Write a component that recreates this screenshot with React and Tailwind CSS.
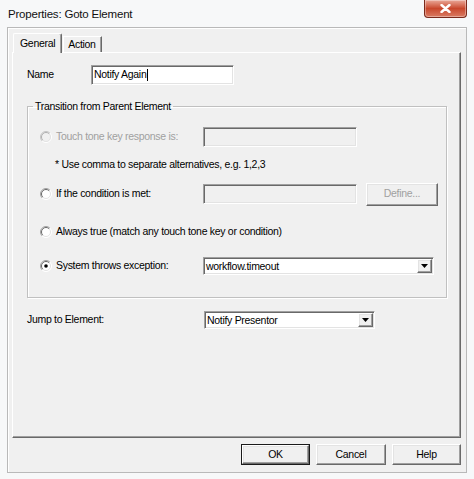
import React from "react";

const sunken =
  "border border-t-[#a0a0a0] border-l-[#a0a0a0] border-r-white border-b-white shadow-[inset_1px_1px_0_#696969,inset_-1px_-1px_0_#e3e3e3]";
const raised =
  "border border-t-white border-l-white border-r-[#696969] border-b-[#696969] shadow-[inset_-1px_-1px_0_#a0a0a0,inset_1px_1px_0_#e3e3e3] bg-[#f0f0f0]";

function Radio({ checked, disabled }) {
  return (
    <svg width="12" height="12" viewBox="0 0 12 12" className="shrink-0">
      <circle cx="6" cy="6" r="5.5" fill={disabled ? "#f0f0f0" : "#ffffff"} />
      <path d="M2.1 9.9 A5.5 5.5 0 0 1 9.9 2.1" stroke={disabled ? "#c4c4c4" : "#a0a0a0"} fill="none" />
      <path d="M9.9 2.1 A5.5 5.5 0 0 1 2.1 9.9" stroke="#ffffff" fill="none" />
      <path d="M2.8 9.2 A4.5 4.5 0 0 1 9.2 2.8" stroke={disabled ? "#b0b0b0" : "#696969"} fill="none" />
      <path d="M9.2 2.8 A4.5 4.5 0 0 1 2.8 9.2" stroke="#e3e3e3" fill="none" />
      {checked && <circle cx="6" cy="6" r="1.8" fill="#000" />}
    </svg>
  );
}

function ArrowBtn() {
  return (
    <div className={`${raised} w-[15px] h-full flex items-center justify-center`}>
      <svg width="7" height="4" viewBox="0 0 7 4">
        <path d="M0 0 H7 L3.5 4 Z" fill="#000" />
      </svg>
    </div>
  );
}

function Combo({ value, w }) {
  return (
    <div className={`${sunken} bg-white ${w} h-[18px] flex items-stretch p-[1px]`}>
      <div className="flex-1 flex items-center pl-[1px] text-black leading-none">{value}</div>
      <ArrowBtn />
    </div>
  );
}

export default function App() {
  return (
    <div className="w-[474px] h-[479px] bg-[#f7f8f9] font-['Liberation_Sans',Arial,sans-serif] text-[10.5px] tracking-[-0.3px] text-black flex flex-col overflow-hidden">
      {/* title bar */}
      <div className="h-[27px] flex items-start shrink-0">
        <div className="pl-[8px] pt-[7px] text-[11.5px] tracking-[-0.2px] leading-[14px] text-[#111]">
          Properties: Goto Element
        </div>
        <div className="ml-auto mr-[7px] w-[43px] h-[18px] rounded-b-[4px] border border-t-0 border-[#7a2a1c] bg-gradient-to-b from-[#e9a898] via-[#c8472c] to-[#d97b63] flex items-center justify-center shadow-[inset_0_0_0_1px_rgba(255,255,255,0.35)]">
          <svg width="11" height="9" viewBox="0 0 11 9">
            <path d="M1.5 1 L9.5 8 M9.5 1 L1.5 8" stroke="#ffffff" strokeWidth="2.4" strokeLinecap="round" />
          </svg>
        </div>
      </div>

      {/* client area */}
      <div className="mx-[7px] h-[446px] border border-[#b9b9b9] bg-[#f0f0f0] flex flex-col shrink-0 shadow-[inset_1px_1px_0_#ffffff]">
        {/* tabs */}
        <div className="h-[24px] pl-[5px] pr-[5px] pt-[5px] flex items-end relative z-10 shrink-0">
          <div className="h-[20px] px-[6px] flex items-center border border-b-0 border-t-white border-l-white border-r-[#696969] bg-[#f0f0f0] mb-[-1px] ml-[0px] rounded-t-[2px] shadow-[inset_-1px_0_0_#a0a0a0]">
            General
          </div>
          <div className="h-[16px] px-[5px] flex items-center border border-b-0 border-t-white border-l-[#f0f0f0] border-r-[#696969] shadow-[inset_-1px_0_0_#a0a0a0,inset_1px_0_0_#ffffff]">
            Action
          </div>
        </div>

        {/* tab panel */}
        <div className="ml-[4px] mr-[5px] h-[386px] border border-t-white border-l-white border-r-[#696969] border-b-[#696969] shadow-[inset_-1px_-1px_0_#a0a0a0] flex flex-col pl-[14px] shrink-0">
          {/* Name row */}
          <div className="mt-[12px] h-[20px] flex items-center">
            <div className="w-[64px]">Name</div>
            <div className={`${sunken} bg-white w-[143px] h-[20px] flex items-center pl-[2px]`}>
              <span>Notify Again</span>
              <span className="w-px h-[12px] bg-black ml-[1px]" />
            </div>
          </div>

          {/* group box */}
          <fieldset className="mt-[14px] w-[420px] border border-[#c0c0c0] shadow-[inset_1px_1px_0_#ffffff,1px_1px_0_#ffffff] pl-[12px] pb-[22px]">
            <legend className="-ml-[7px] px-[2px] leading-[14px]">Transition from Parent Element</legend>

            <div className="mt-[13px] h-[22px] flex items-center">
              <Radio disabled />
              <div className="ml-[4px] w-[147px] text-[#a0a0a0]">Touch tone key response is:</div>
              <div className={`${sunken} bg-[#f0f0f0] w-[154px] h-[20px]`} />
            </div>

            <div className="mt-[10px] h-[14px] flex items-center pl-[15px]">
              * Use comma to separate alternatives, e.g. 1,2,3
            </div>

            <div className="mt-[10px] h-[24px] flex items-center">
              <Radio />
              <div className="ml-[4px] w-[147px]">If the condition is met:</div>
              <div className={`${sunken} bg-[#f0f0f0] w-[154px] h-[20px]`} />
              <div className={`${raised} ml-[9px] w-[72px] h-[23px] flex items-center justify-center text-[#a0a0a0]`}>
                Define...
              </div>
            </div>

            <div className="mt-[18px] h-[16px] flex items-center">
              <Radio />
              <div className="ml-[4px]">Always true (match any touch tone key or condition)</div>
            </div>

            <div className="mt-[17px] h-[18px] flex items-center">
              <Radio checked />
              <div className="ml-[4px] w-[147px]">System throws exception:</div>
              <Combo value="workflow.timeout" w="w-[231px]" />
            </div>
          </fieldset>

          {/* Jump row */}
          <div className="mt-[13px] h-[18px] flex items-center">
            <div className="w-[177px]">Jump to Element:</div>
            <Combo value="Notify Presentor" w="w-[171px]" />
          </div>
        </div>

        {/* buttons */}
        <div className="mt-[6px] flex justify-end gap-[6px] pr-[5px]">
          <div className="border border-[#1a1a1a] w-[69px] h-[21px] flex">
            <div className={`${raised} flex-1 flex items-center justify-center`}>OK</div>
          </div>
          <div className={`${raised} w-[70px] h-[21px] flex items-center justify-center`}>Cancel</div>
          <div className={`${raised} w-[69px] h-[21px] flex items-center justify-center`}>Help</div>
        </div>
      </div>
    </div>
  );
}
